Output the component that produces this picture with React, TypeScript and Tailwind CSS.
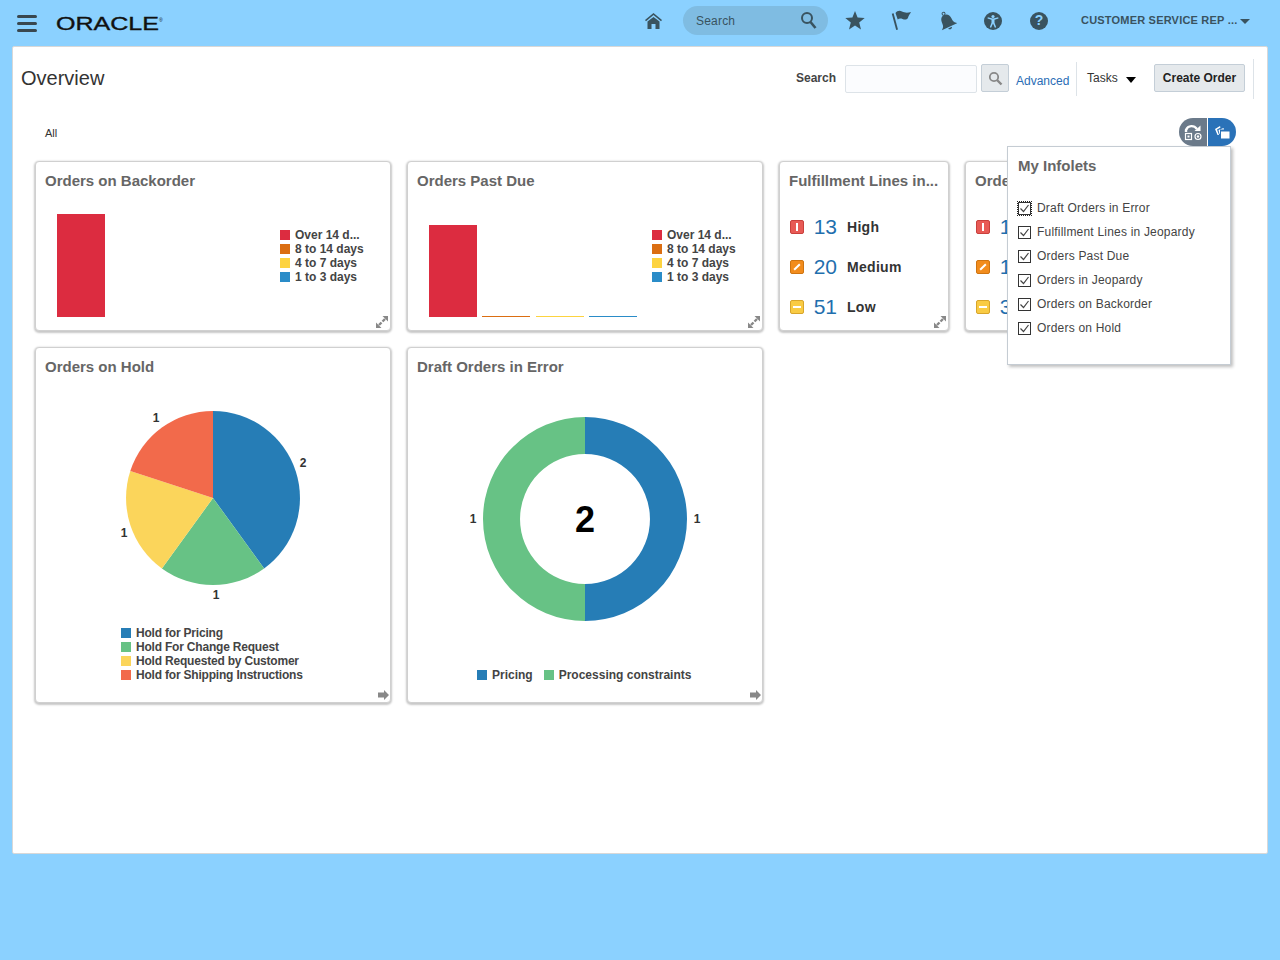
import type { ReactNode } from 'react';

const expandIcon = (
    <svg width="14" height="14" viewBox="0 0 14 14" className="absolute right-[1px] bottom-[1px] fill-[#888] stroke-[#888]">
        <path d="M7.500 1H13v5.500z" strokeWidth="0" />
        <path d="M1 7.500V13h5.500z" strokeWidth="0" />
        <path d="M10 4L7.500 6.500M4 10l2.500-2.500" strokeWidth="2.400" />
    </svg>
);

const arrowIcon = (
    <svg width="11" height="10" viewBox="0 0 11 10" className="absolute right-[1px] bottom-[2px] fill-[#888]">
        <path d="M0 2.500h6V0l5 5-5 5V7.500H0z" />
    </svg>
);

function Card({
    title,
    width,
    height,
    action,
    children,
}: {
    title: string;
    width: string;
    height: string;
    action: ReactNode;
    children: ReactNode;
}) {
    return (
        <div className={`relative shrink-0 rounded-[4px] border border-[#d0d0d0] bg-white shadow-[0_1px_2px_1px_rgba(0,0,0,0.22)] ${width} ${height}`}>
            <div className="pt-[9px] pb-[1px] pl-[9px] text-[15px] leading-[19px] font-bold whitespace-nowrap text-[#666]">
                {title}
            </div>
            {children}
            {action}
        </div>
    );
}

function Legend({ items, className }: { items: [string, string][]; className: string }) {
    return (
        <div className={className}>
            {items.map(([color, label]) => (
                <div key={label} className="flex h-[14px] items-center gap-[5px] text-[12px] font-bold whitespace-nowrap text-[#444]">
                    <span className={`h-[10px] w-[10px] ${color}`} />
                    {label}
                </div>
            ))}
        </div>
    );
}

const dayLegend: [string, string][] = [
    ['bg-[#dc2c40]', 'Over 14 d...'],
    ['bg-[#db6e12]', '8 to 14 days'],
    ['bg-[#fdd340]', '4 to 7 days'],
    ['bg-[#2a8cc8]', '1 to 3 days'],
];

function BarCard({ title, bars }: { title: string; bars: [string, string][] }) {
    return (
        <Card title={title} width="w-[356px]" height="h-[170px]" action={expandIcon}>
            <div className="flex h-[120px] pt-[14px]">
                <div className="flex h-[112px] w-[244px] items-end gap-[5.300px] pl-[21px]">
                    {bars.map(([size, color], i) => (
                        <div key={i} className={`w-[48px] ${size} ${color}`} />
                    ))}
                </div>
                <Legend items={dayLegend} className="mt-[23px] flex flex-col" />
            </div>
        </Card>
    );
}

function Tile({ kind }: { kind: 'high' | 'medium' | 'low' }) {
    if (kind === 'high') {
        return (
            <span className="flex h-[14px] w-[14px] items-center justify-center rounded-[2px] border border-[#c9403c] bg-[#e85a55]">
                <span className="h-[8px] w-[2px] bg-white" />
            </span>
        );
    }
    if (kind === 'medium') {
        return (
            <span className="flex h-[14px] w-[14px] items-center justify-center rounded-[2px] border border-[#cf7410] bg-[#f28c1c]">
                <span className="h-[8px] w-[2px] rotate-45 bg-white" />
            </span>
        );
    }
    return (
        <span className="flex h-[14px] w-[14px] items-center justify-center rounded-[2px] border border-[#d8a52b] bg-[#f9cb44]">
            <span className="h-[2px] w-[8px] bg-white" />
        </span>
    );
}

function SeverityCard({ title, rows, width }: { title: string; rows: [string, string, 'high' | 'medium' | 'low'][]; width: string }) {
    return (
        <Card title={title} width={width} height="h-[170px]" action={expandIcon}>
            <div className="flex flex-col pt-[16px] pl-[10px]">
                {rows.map(([count, label, kind]) => (
                    <div key={label} className="flex h-[40px] items-center">
                        <Tile kind={kind} />
                        <span className="w-[43px] pr-[10px] text-right text-[21px] text-[#1f6fae]">{count}</span>
                        <span className="text-[14px] font-bold tracking-[0.3px] text-[#333]">{label}</span>
                    </div>
                ))}
            </div>
        </Card>
    );
}

function PieChart() {
    return (
        <svg width="354" height="220" viewBox="0 0 354 220" className="mt-[18px] block">
            <path d="M177 103V16A87 87 0 0 1 228.100 173.400Z" fill="#267db6" />
            <path d="M177 103L228.100 173.400A87 87 0 0 1 125.900 173.400Z" fill="#67c285" />
            <path d="M177 103L125.900 173.400A87 87 0 0 1 94.300 76.100Z" fill="#fbd55b" />
            <path d="M177 103L94.300 76.100A87 87 0 0 1 177 16Z" fill="#f26a4b" />
            <g className="text-[12px] font-bold" fill="#333" textAnchor="middle">
                <text x="120" y="27">1</text>
                <text x="267" y="72">2</text>
                <text x="88" y="142">1</text>
                <text x="180" y="204">1</text>
            </g>
        </svg>
    );
}

function DonutChart() {
    return (
        <svg width="354" height="250" viewBox="0 0 354 250" className="mt-[18px] block">
            <path d="M177 22A102 102 0 0 1 177 226V189A65 65 0 0 0 177 59Z" fill="#267db6" />
            <path d="M177 226A102 102 0 0 1 177 22V59A65 65 0 0 0 177 189Z" fill="#67c285" />
            <text x="177" y="137" textAnchor="middle" className="text-[36px] font-bold" fill="#000">2</text>
            <g className="text-[12px] font-bold" fill="#333" textAnchor="middle">
                <text x="65" y="128">1</text>
                <text x="289" y="128">1</text>
            </g>
        </svg>
    );
}

function Infolets() {
    const names = [
        'Draft Orders in Error',
        'Fulfillment Lines in Jeopardy',
        'Orders Past Due',
        'Orders in Jeopardy',
        'Orders on Backorder',
        'Orders on Hold',
    ];
    return (
        <div className="absolute top-[99px] left-[994px] z-10 h-[219px] w-[224px] border border-[#c5ccd3] bg-white px-[10px] pt-[9px] shadow-[2px_2px_3px_rgba(0,0,0,0.25)]">
            <div className="text-[15px] leading-[19px] font-bold text-[#666]">My Infolets</div>
            <div className="mt-[21px] flex flex-col">
                {names.map((name, i) => (
                    <div key={name} className="flex h-[24px] items-center gap-[6px] text-[12px] tracking-[0.2px] text-[#444]">
                        <span className={`flex h-[13px] w-[13px] items-center justify-center border border-[#333] ${i === 0 ? 'outline-1 outline-offset-0 outline-dotted outline-[#222]' : ''}`}>
                            <svg width="11" height="11" viewBox="0 0 11 11" fill="none" stroke="#444" strokeWidth="1.200">
                                <path d="M1.500 5.500l3 3 5-6.500" />
                            </svg>
                        </span>
                        {name}
                    </div>
                ))}
            </div>
        </div>
    );
}

function Header() {
    return (
        <div className="flex h-[46px] items-center text-[#39535f]">
            <div className="ml-[17px] flex w-[20px] flex-col gap-[4px]">
                <span className="h-[3px] rounded-sm bg-[#39474f]" />
                <span className="h-[3px] rounded-sm bg-[#39474f]" />
                <span className="h-[3px] rounded-sm bg-[#39474f]" />
            </div>
            <svg width="108" height="18" viewBox="0 0 108 18" className="ml-[19px]">
                <text x="0" y="15.500" textLength="103" lengthAdjust="spacingAndGlyphs" className="text-[18px]" fill="#111" stroke="#111" strokeWidth="0.350">
                    ORACLE
                </text>
                <text x="103" y="8" className="text-[5px]" fill="#111">®</text>
            </svg>

            <div className="flex items-center pb-[5px]">
                <svg width="19" height="18" viewBox="0 0 19 18" className="ml-[480px] fill-[#39535f]">
                    <path d="M9.500 1L1 8l1 1.200 7.500-6.100L17 9.200 18 8z" />
                    <path d="M3.500 9.500L9.500 5l6 4.500V17h-4v-5h-4v5h-4z" />
                </svg>
                <div className="ml-[20px] flex h-[29px] w-[145px] items-center justify-between rounded-full bg-[#7fbce2] pr-[10px] pl-[13px] text-[12px] tracking-[0.2px]">
                    Search
                    <svg width="18" height="19" viewBox="0 0 18 19" fill="none" stroke="#39535f">
                        <circle cx="7" cy="7" r="5" strokeWidth="2" />
                        <path d="M10.500 11l5 6" strokeWidth="2.600" />
                    </svg>
                </div>
                <svg width="20" height="19" viewBox="0 0 20 19" className="ml-[17px] fill-[#39535f]">
                    <path d="M10 0l2.600 6.600 7.100.4-5.500 4.500 1.800 6.900L10 14.600 4 18.400l1.800-6.900L.3 7l7.100-.4z" />
                </svg>
                <svg width="21" height="21" viewBox="0 0 21 21" className="ml-[26px] fill-[#39535f]">
                    <path d="M.8 3.800L2.600 3.200 7 19.500l-1.800.5z" />
                    <path d="M4.500 3c1.500-2 4-2.800 6.500-1.500 2.500 1.200 5 1.700 9 .5-1 2.300-2.500 3.300-3 5.800-.4 1.700-3 2.300-5.500 1.200-1.800-.8-3.500-.6-4.800.6z" />
                </svg>
                <svg width="19" height="20" viewBox="0 0 19 20" className="ml-[26px]">
                    <g transform="rotate(-25 9.500 10)">
                        <circle cx="9" cy="1.800" r="1.500" fill="none" stroke="#39535f" strokeWidth="1" />
                        <path d="M9 3.200c-3.200 0-5.200 2.400-5.200 6 0 4-1.200 5.300-3.300 6.800h17c-2.100-1.500-3.300-2.800-3.300-6.800 0-3.600-2-6-5.200-6z" fill="#39535f" />
                        <path d="M7 17h4c0 2.300-4 2.300-4 0z" fill="#39535f" />
                    </g>
                </svg>
                <svg width="18" height="18" viewBox="0 0 18 18" className="ml-[27px]">
                    <circle cx="9" cy="9" r="9" fill="#39535f" />
                    <circle cx="9" cy="4.500" r="1.600" fill="#8bd1ff" />
                    <path d="M3.500 6.500l4 1.200v3l-1.700 4.500 1.300.5L9 11.500l1.900 4.200 1.300-.5-1.700-4.500v-3l4-1.200-.3-1.200L9 6.400 3.800 5.300z" fill="#8bd1ff" />
                </svg>
                <div className="ml-[28px] flex h-[18px] w-[18px] items-center justify-center rounded-full bg-[#39535f] text-[14px] font-bold text-[#8bd1ff]">?</div>
                <span className="ml-[33px] w-[159px] text-[11px] font-bold tracking-[0.2px] whitespace-nowrap">CUSTOMER SERVICE REP ...</span>
                <span className="mt-[2px] h-0 w-0 border-x-[5px] border-t-[5px] border-x-transparent border-t-[#39535f]" />
            </div>
        </div>
    );
}

function Toolbar() {
    return (
        <div className="flex h-[64px] items-center pl-[8px]">
            <h1 className="mt-[-2px] w-[775px] text-[20px] text-[#333]">Overview</h1>
            <span className="mt-[-3px] w-[49px] text-[12px] font-bold text-[#444]">Search</span>
            <input className="h-[28px] w-[132px] rounded-[2px] border border-[#dde3e8] bg-[#fbfcfe]" />
            <div className="mt-[-2px] ml-[4px] flex h-[28px] w-[28px] items-center justify-center rounded-[2px] border border-[#c4ced7] bg-[#e5e9ec]">
                <svg width="15" height="15" viewBox="0 0 15 15" fill="none" stroke="#888">
                    <circle cx="6" cy="6" r="4.200" strokeWidth="1.800" />
                    <path d="M9 9l4.500 4.500" strokeWidth="2.400" />
                </svg>
            </div>
            <a className="mt-[4px] ml-[7px] w-[53px] text-[12px] whitespace-nowrap text-[#2a6db5]">Advanced</a>
            <span className="ml-[7px] h-[34px] w-px bg-[#dde3e8]" />
            <span className="mt-[-3px] ml-[10px] w-[33px] text-[12px] text-[#333]">Tasks</span>
            <span className="mt-[1px] ml-[6px] h-0 w-0 border-x-[5px] border-t-[6px] border-x-transparent border-t-black" />
            <button className="mt-[-2px] ml-[18px] h-[28px] w-[91px] rounded-[2px] border border-[#c4ced7] bg-[#e5e9ec] text-[12px] font-bold text-[#222]">
                Create Order
            </button>
            <span className="ml-[8px] h-[40px] w-px bg-[#dde3e8]" />
        </div>
    );
}

export default function App() {
    return (
        <div className="min-h-[960px] overflow-hidden bg-[#8bd1ff] font-['Liberation_Sans',Arial,sans-serif]">
            <Header />
            <div className="relative mx-[12px] h-[808px] overflow-hidden rounded-[2px] border border-[#d8d8d8] bg-white">
                <Toolbar />
                <div className="flex h-[50px] items-start justify-between pr-[31px] pl-[32px]">
                    <span className="mt-[14px] text-[11px] text-[#333]">All</span>
                    <div className="mt-[7px] flex h-[28px] gap-px">
                        <div className="flex w-[28px] items-center justify-center rounded-l-full bg-[#6b7a8a]">
                            <svg width="20" height="18" viewBox="0 0 20 18" fill="none" stroke="#fff">
                                <path d="M3 9V7c2-5 8-5 11-1" strokeWidth="2.400" />
                                <path d="M11.500 8h6V2.500z" fill="#fff" stroke="none" />
                                <rect x="2.500" y="10.500" width="6" height="6" strokeWidth="1.200" />
                                <rect x="4.500" y="12.500" width="2" height="2" fill="#fff" stroke="none" />
                                <circle cx="15" cy="13.500" r="3" strokeWidth="1.200" />
                                <circle cx="15" cy="13.500" r="1.200" fill="#fff" stroke="none" />
                            </svg>
                        </div>
                        <div className="flex w-[28px] items-center justify-center rounded-r-full bg-[#2a72b8]">
                            <svg width="16" height="15" viewBox="0 0 16 15" fill="#fff">
                                <rect x="7" y="6.500" width="8.500" height="7" />
                                <path d="M1 4l5-3 .5 1.500L3 4.500 5 10H3.500z" />
                                <path d="M4.500 5l5-2 .5 1.500H6V9H5.500z" />
                            </svg>
                        </div>
                    </div>
                </div>
                <div className="flex flex-col gap-[16px] pl-[22px]">
                    <div className="flex gap-[16px]">
                        <BarCard title="Orders on Backorder" bars={[['h-[103px]', 'bg-[#dc2c40]']]} />
                        <BarCard
                            title="Orders Past Due"
                            bars={[
                                ['h-[92px]', 'bg-[#dc2c40]'],
                                ['h-[1.500px]', 'bg-[#db6e12]'],
                                ['h-[1.500px]', 'bg-[#fdd340]'],
                                ['h-[1.500px]', 'bg-[#2a8cc8]'],
                            ]}
                        />
                        <SeverityCard
                            title="Fulfillment Lines in..."
                            width="w-[170px]"
                            rows={[
                                ['13', 'High', 'high'],
                                ['20', 'Medium', 'medium'],
                                ['51', 'Low', 'low'],
                            ]}
                        />
                        <SeverityCard
                            title="Orders in..."
                            width="w-[170px]"
                            rows={[
                                ['13', 'High', 'high'],
                                ['18', 'Medium', 'medium'],
                                ['32', 'Low', 'low'],
                            ]}
                        />
                    </div>
                    <div className="flex gap-[16px]">
                        <Card title="Orders on Hold" width="w-[356px]" height="h-[356px]" action={arrowIcon}>
                            <PieChart />
                            <Legend
                                className="mt-[11px] ml-[85px] flex flex-col tracking-[-0.2px]"
                                items={[
                                    ['bg-[#267db6]', 'Hold for Pricing'],
                                    ['bg-[#67c285]', 'Hold For Change Request'],
                                    ['bg-[#fbd55b]', 'Hold Requested by Customer'],
                                    ['bg-[#f26a4b]', 'Hold for Shipping Instructions'],
                                ]}
                            />
                        </Card>
                        <Card title="Draft Orders in Error" width="w-[356px]" height="h-[356px]" action={arrowIcon}>
                            <DonutChart />
                            <div className="mt-[23px] ml-[69px] flex gap-[11px]">
                                <Legend className="flex" items={[['bg-[#267db6]', 'Pricing']]} />
                                <Legend className="flex" items={[['bg-[#67c285]', 'Processing constraints']]} />
                            </div>
                        </Card>
                    </div>
                </div>
                <Infolets />
            </div>
        </div>
    );
}
